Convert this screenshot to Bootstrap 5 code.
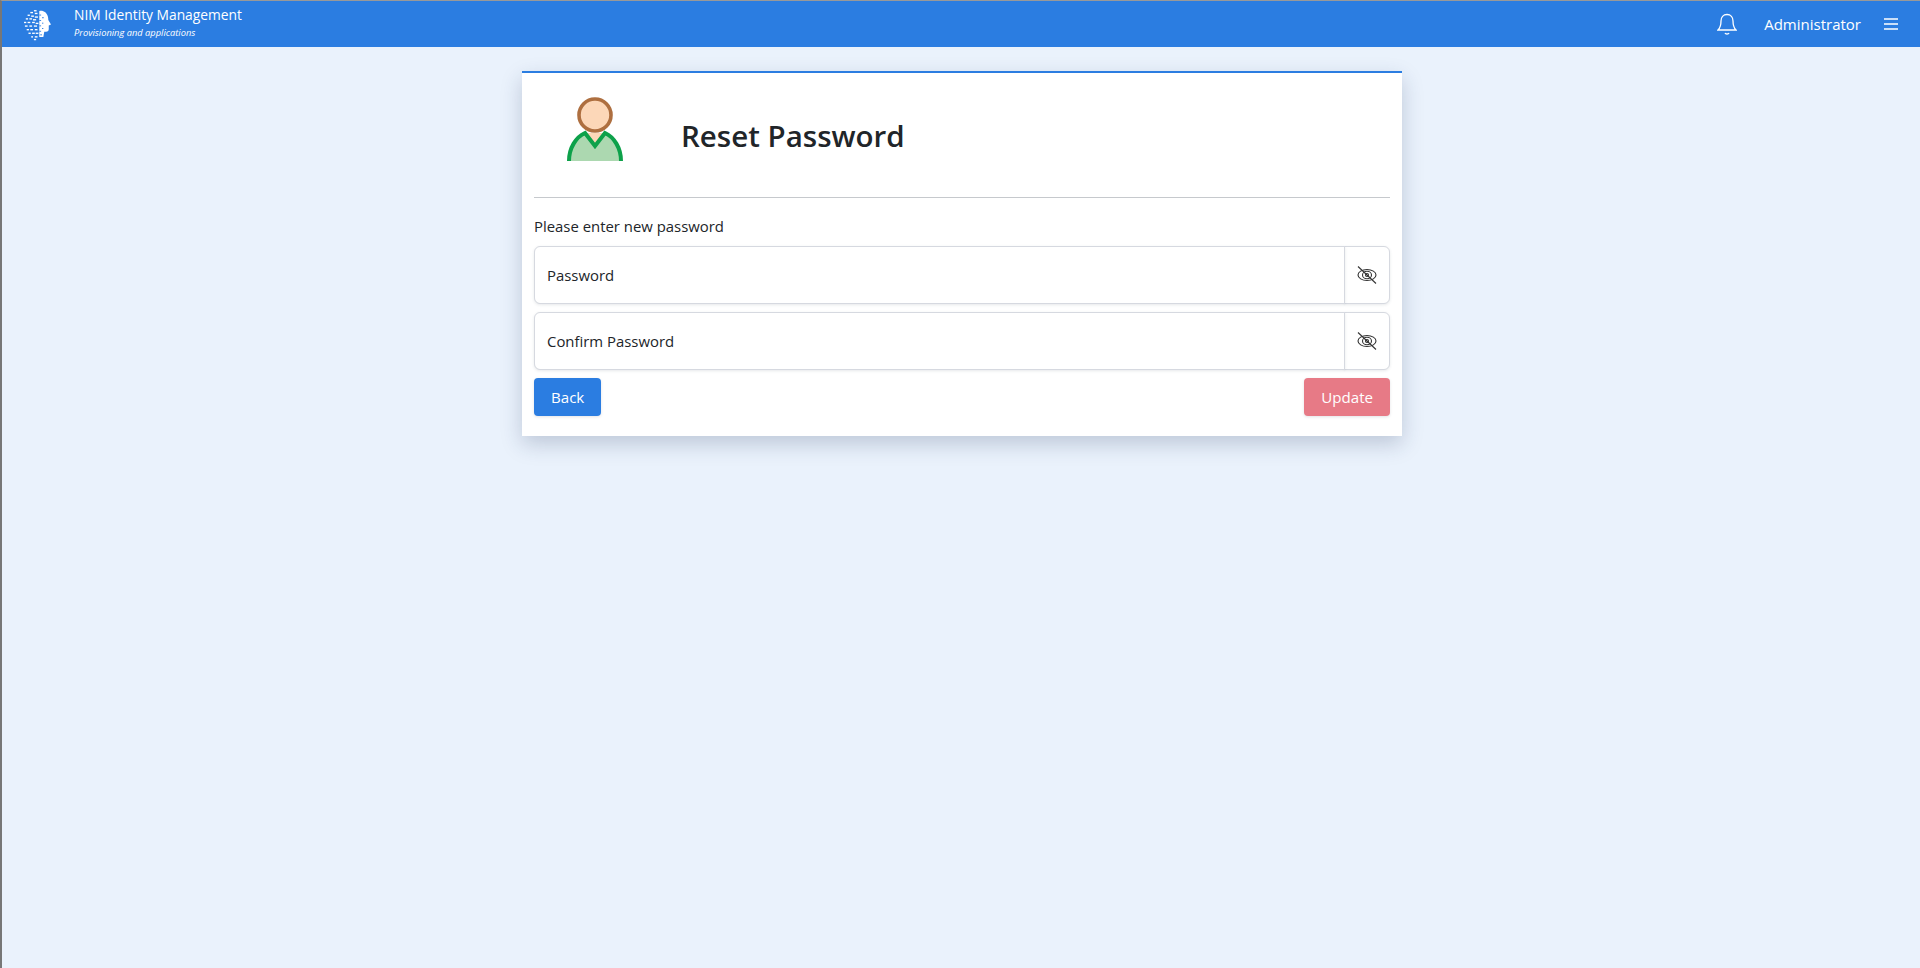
<!DOCTYPE html>
<html lang="en">
<head>
    <meta charset="UTF-8">
    <meta name="viewport" content="width=device-width, initial-scale=1.0">
    <title>Reset Password</title>
    <link rel="stylesheet" href="https://cdn.jsdelivr.net/npm/bootstrap@5.3.0/dist/css/bootstrap.min.css">
    <style>
        html, body { height: 100%; }
        body {
            background-color: #eaf2fc;
            border-left: 2px solid #777;
            border-top: 1px solid #999;
            font-family: "Open Sans", "Liberation Sans", sans-serif;
            font-size: 14.9px;
            color: #212529;
        }
        .top-bar { background-color: #2b7de1; height: 46px; padding: 0 22px; color: #fff; }
        .brand-logo { width: 27px; height: 33px; margin-right: 23px; }
        .brand-text { margin-bottom: 3px; }
        .brand-name { font-size: 13.8px; line-height: 18px; }
        .brand-sub { font-size: 9.3px; line-height: 12px; font-style: italic; margin-top: 3px; }
        .user-name { font-size: 15px; margin: 0 23px 0 27px; }
        .page-body { padding-left: 2px; }
        .reset-panel {
            width: 880px;
            margin: 24px auto 0;
            background: #fff;
            border-top: 2px solid #2b7de1;
            padding: 0 12px 20px;
            box-shadow: 0 8px 20px rgba(30, 50, 90, .22);
        }
        .panel-head { height: 124px; }
        .user-pic { width: 56px; height: 64px; margin: -12px 0 0 33px; }
        .panel-title { font-size: 29.5px; font-weight: 600; margin: 2px 0 0 58px; }
        .panel-line { margin: 0 0 18px; border-top: 1px solid #c6c9cd; opacity: 1; }
        .panel-hint { line-height: 20px; margin-bottom: 10px; }
        .pw-group { height: 58px; margin-bottom: 8px; }
        .pw-group .form-control {
            font-size: 14.9px;
            padding-left: 12px;
            border-color: #d6d9e0;
            color: #212529;
            border-radius: 6px;
            box-shadow: 0 1px 3px rgba(60, 70, 90, .12);
        }
        .pw-group .form-control::placeholder { color: #212529; opacity: 1; }
        .pw-group .input-group-text {
            width: 46px;
            background: #fff;
            border-color: #d6d9e0;
            padding: 0;
            justify-content: center;
            box-shadow: 0 1px 3px rgba(60, 70, 90, .12);
        }
        .action-btn { height: 38px; font-size: 15.1px; padding: 0 17px; color: #fff; border: 0; border-radius: 4px; box-shadow: 0 1px 3px rgba(60, 70, 90, .15); }
        .btn-back { background-color: #2b7de1; }
        .btn-update { background-color: #e77a86; }
    </style>
</head>
<body>
    <nav class="top-bar d-flex align-items-center">
        <svg class="brand-logo" viewBox="0 0 30 36" fill="#fff">
            <path d="M17 3c4.500-1 8.500 2 9.500 6 .5 2 .5 3 .5 4l3 5-2.500 1v4c0 2-1 3-3 3h-2l-1 6h-4.500z"/>
            <g fill="#2b7de1">
                <rect x="17" y="7" width="2" height="1"/><rect x="20" y="10" width="2" height="1"/>
                <rect x="17" y="13" width="2" height="1"/><rect x="20" y="16" width="1.500" height="1"/>
                <rect x="17" y="19" width="2" height="1"/><rect x="20" y="22" width="1.500" height="1"/>
                <rect x="17" y="25" width="2" height="1"/><rect x="18" y="29" width="2" height="1"/>
            </g>
            <rect x="11" y="2" width="3" height="1.500"/><rect x="7" y="4" width="3" height="1.500"/>
            <rect x="12" y="5" width="3" height="1.500"/><rect x="4" y="7" width="2.500" height="1.500"/>
            <rect x="8" y="8" width="3" height="1.500"/><rect x="12" y="9" width="3.500" height="1.500"/>
            <rect x="2" y="11" width="2.500" height="1.500"/><rect x="6" y="11" width="3" height="1.500"/>
            <rect x="10" y="12" width="3.500" height="1.500"/><rect x="0" y="15" width="2.500" height="1.500"/>
            <rect x="4" y="15" width="3" height="1.500"/><rect x="9" y="15" width="3" height="1.500"/>
            <rect x="13" y="16" width="3" height="1.500"/><rect x="1" y="19" width="3" height="1.500"/>
            <rect x="6" y="19" width="3" height="1.500"/><rect x="11" y="19" width="3.500" height="1.500"/>
            <rect x="3" y="23" width="2.500" height="1.500"/><rect x="7" y="23" width="3" height="1.500"/>
            <rect x="12" y="23" width="3" height="1.500"/><rect x="5" y="27" width="2.500" height="1.500"/>
            <rect x="9" y="27" width="3" height="1.500"/><rect x="13" y="27" width="3" height="1.500"/>
            <rect x="8" y="31" width="2" height="1.500"/><rect x="12" y="31" width="3" height="1.500"/>
            <rect x="11" y="34" width="2.500" height="1.500"/>
        </svg>
        <div class="brand-text">
            <div class="brand-name">NIM Identity Management</div>
            <div class="brand-sub">Provisioning and applications</div>
        </div>
        <svg class="ms-auto" width="20" height="23" viewBox="0 0 20 23" fill="none" stroke="#fff" stroke-width="1.300">
            <path d="M10 1.500c-3.800 0-6 3-6 6.500 0 4-1 7-3 9h18c-2-2-3-5-3-9 0-3.500-2.200-6.500-6-6.500z"/>
            <path d="M8 20c.5 1.300 3.500 1.300 4 0"/>
        </svg>
        <span class="user-name">Administrator</span>
        <svg width="14" height="12" viewBox="0 0 14 12" stroke="#fff" stroke-width="1.500">
            <path d="M0 1h14M0 6h14M0 11h14"/>
        </svg>
    </nav>

    <div class="page-body">
        <div class="reset-panel">
            <div class="panel-head d-flex align-items-center">
                <svg class="user-pic" viewBox="0 0 56 64">
                    <path d="M2 64c0-13 7-24 16-28l10 13 10-13c9 4 16 15 16 28z" fill="#acd8b0"/>
                    <path d="M18 36h20l-10 13z" fill="#fcd7b8"/>
                    <path d="M2 64c0-13 7-24 16-28l10 13 10-13c9 4 16 15 16 28" fill="none" stroke="#0da14a" stroke-width="4"/>
                    <circle cx="28" cy="18" r="16" fill="#fcd7b8" stroke="#ae6f40" stroke-width="3.600"/>
                </svg>
                <h1 class="panel-title">Reset Password</h1>
            </div>
            <hr class="panel-line">
            <div class="panel-hint">Please enter new password</div>
            <div class="input-group pw-group">
                <input type="password" class="form-control" placeholder="Password">
                <span class="input-group-text">
                    <svg width="20" height="20" viewBox="0 0 20 20" fill="none" stroke="#333" stroke-width="1.100">
                        <ellipse cx="10" cy="10" rx="9" ry="5.500"/>
                        <ellipse cx="10" cy="10" rx="4.500" ry="3.800"/>
                        <circle cx="10" cy="10" r="1.500"/>
                        <path d="M1 1.500l18 17"/>
                    </svg>
                </span>
            </div>
            <div class="input-group pw-group">
                <input type="password" class="form-control" placeholder="Confirm Password">
                <span class="input-group-text">
                    <svg width="20" height="20" viewBox="0 0 20 20" fill="none" stroke="#333" stroke-width="1.100">
                        <ellipse cx="10" cy="10" rx="9" ry="5.500"/>
                        <ellipse cx="10" cy="10" rx="4.500" ry="3.800"/>
                        <circle cx="10" cy="10" r="1.500"/>
                        <path d="M1 1.500l18 17"/>
                    </svg>
                </span>
            </div>
            <div class="d-flex justify-content-between">
                <button class="btn action-btn btn-back" type="button">Back</button>
                <button class="btn action-btn btn-update" type="button">Update</button>
            </div>
        </div>
    </div>
    <script src="https://cdn.jsdelivr.net/npm/bootstrap@5.3.0/dist/js/bootstrap.bundle.min.js"></script>
</body>
</html>
